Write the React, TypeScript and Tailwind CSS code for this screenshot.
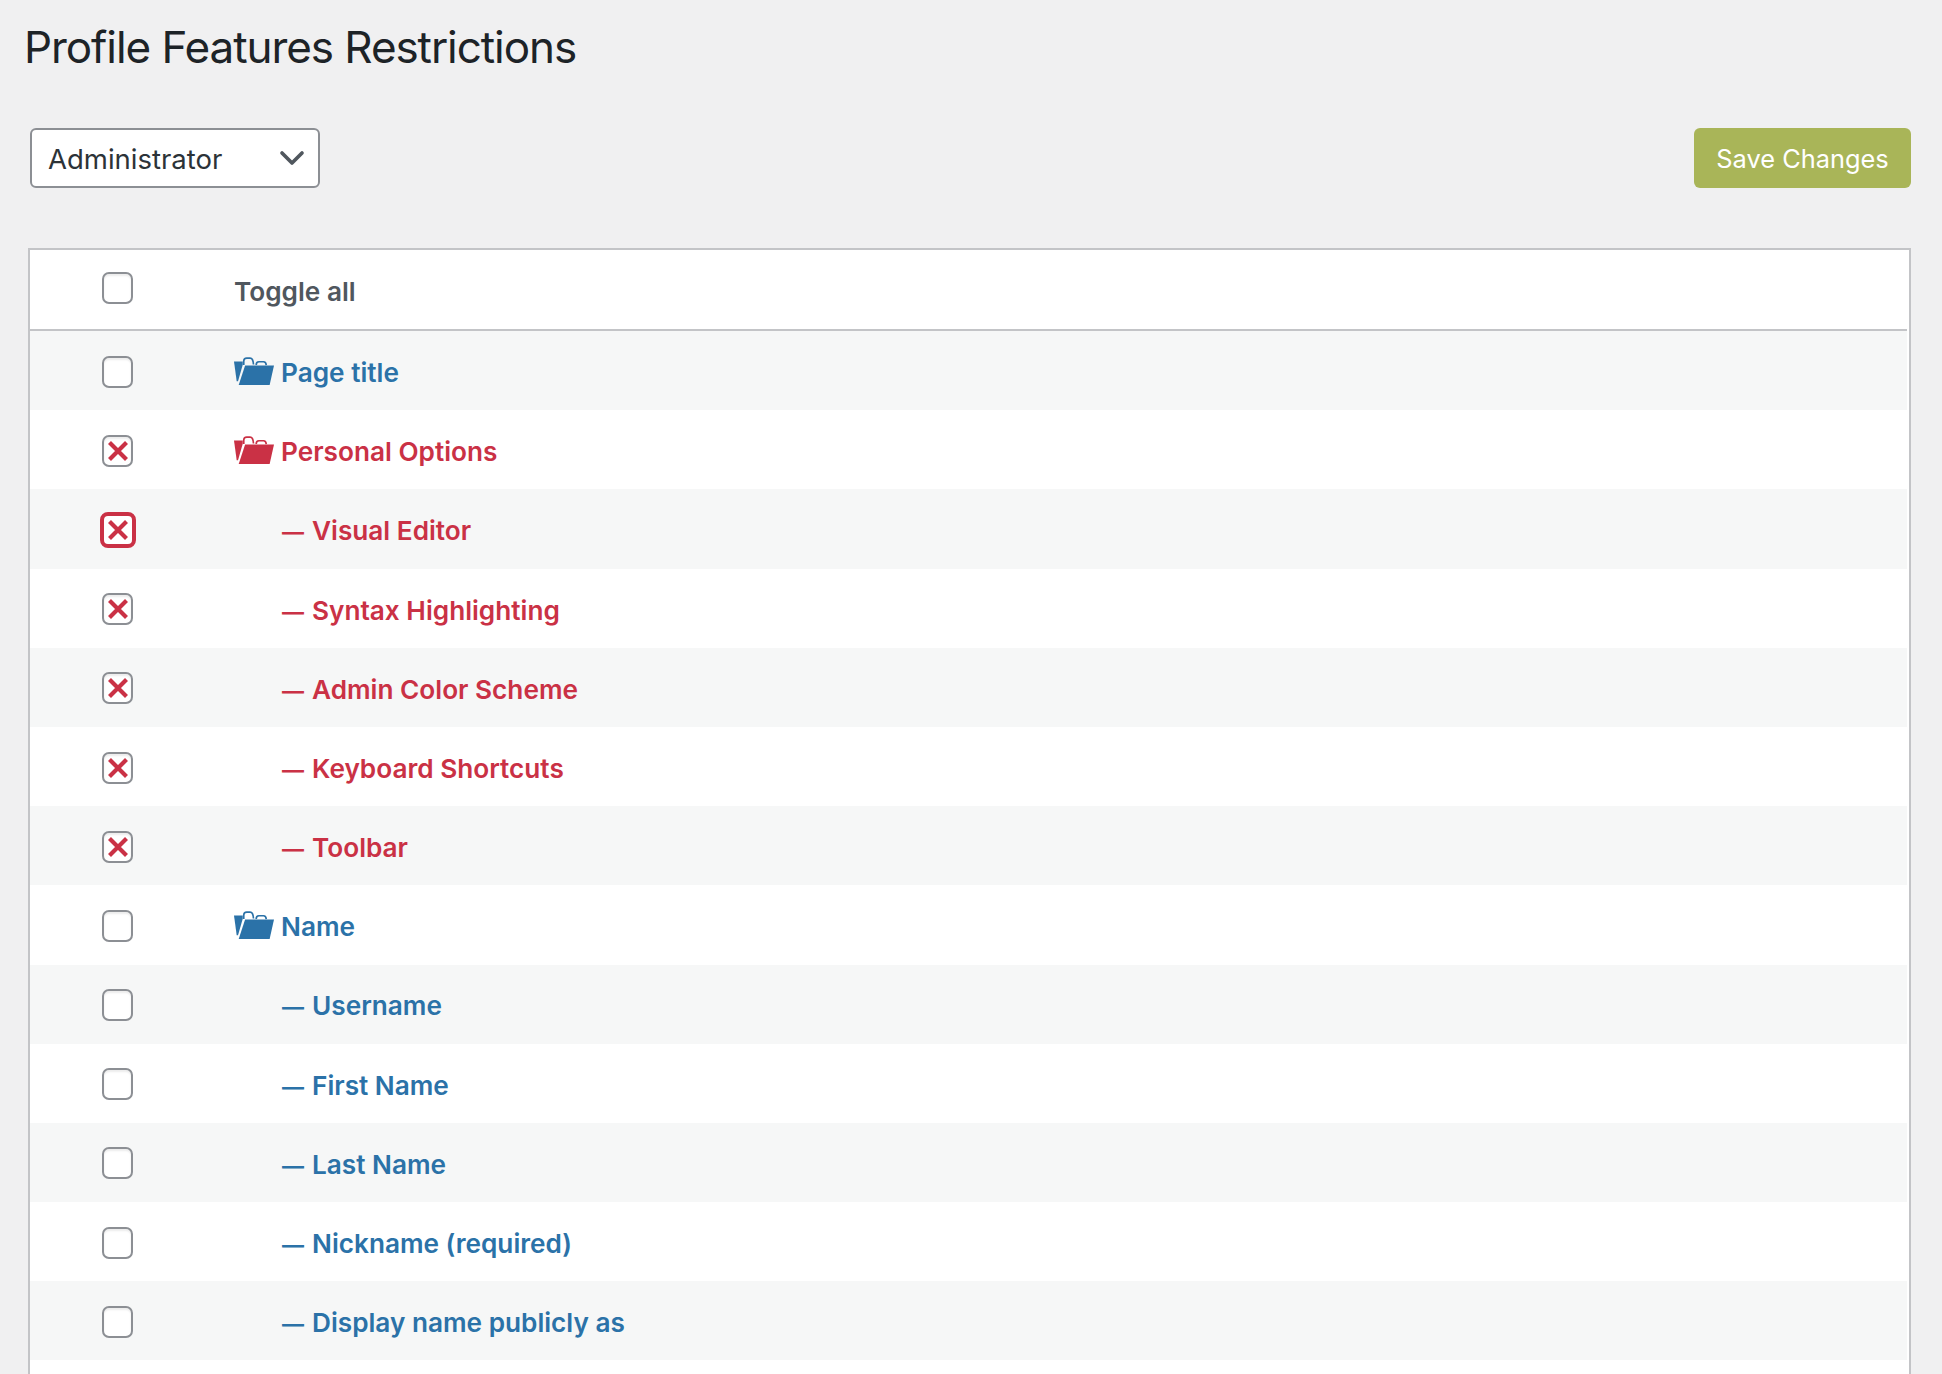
import { ChevronDown } from 'lucide-react';

type Row = { label: string; child?: boolean; off?: boolean; focus?: boolean };

const rows: Row[] = [
  { label: 'Page title' },
  { label: 'Personal Options', off: true },
  { label: 'Visual Editor', child: true, off: true, focus: true },
  { label: 'Syntax Highlighting', child: true, off: true },
  { label: 'Admin Color Scheme', child: true, off: true },
  { label: 'Keyboard Shortcuts', child: true, off: true },
  { label: 'Toolbar', child: true, off: true },
  { label: 'Name' },
  { label: 'Username', child: true },
  { label: 'First Name', child: true },
  { label: 'Last Name', child: true },
  { label: 'Nickname (required)', child: true },
  { label: 'Display name publicly as', child: true },
];

function FolderIcon() {
  return (
    <svg viewBox="0 0 119 83" className="w-10 h-7 shrink-0 fill-current stroke-current" strokeWidth="0">
      <path d="M0 13H26V23L12 72H8z" />
      <path d="M33 25H119L106 83H14z" />
      <path d="M29 24V12Q29 3 38 3H48Q57 3 58 22M66 24Q66 14 74 14H88Q95 14 96 24" fill="none" strokeWidth="5" />
    </svg>
  );
}

function Checkbox({ off, focus }: { off?: boolean; focus?: boolean }) {
  return (
    <span
      className={
        focus
          ? 'flex items-center justify-center w-9 h-9 rounded-[8px] border-4 border-[#ca3145] bg-white'
          : 'flex items-center justify-center w-[31px] h-8 rounded-[7px] border-2 border-[#8c8f94] bg-white shadow-[inset_0_2px_2px_rgba(0,0,0,0.08)]'
      }
    >
      {off && (
        <svg viewBox="0 0 20 20" className="w-5 h-5 shrink-0 stroke-[#ca3145]" strokeWidth="4.200" fill="none">
          <path d="M1.500 1.500 18.500 18.500M18.500 1.500 1.500 18.500" />
        </svg>
      )}
    </span>
  );
}

export default function App() {
  return (
    <div className="h-[1374px] overflow-hidden bg-[#f0f0f1] font-['Inter',sans-serif] pl-[28px] pr-[31px]">
      <h1 className="-ml-[4px] pt-[21px] text-[44px] leading-[52px] font-normal tracking-[-1.07px] text-[#1d2327]">
        Profile Features Restrictions
      </h1>

      <div className="mt-[55px] ml-[2px] flex items-center justify-between">
        <div className="flex items-center justify-between w-[290px] h-[60px] pl-[16px] pr-[6px] rounded-[6px] border-2 border-[#8c8f94] bg-white text-[27.500px] text-[#2c3338]">
          <span className="pt-[3px]">Administrator</span>
          <ChevronDown className="w-10 h-10 text-[#50575e]" strokeWidth={2.200} />
        </div>
        <button className="w-[217px] h-[60px] pt-[2px] rounded-[6px] bg-[#a9b558] text-[25.400px] text-white">
          Save Changes
        </button>
      </div>

      <div className="mt-[60px] border-2 border-[#c3c4c7] bg-white pr-[2px]">
        <div className="flex items-center h-[81px] border-b-2 border-[#c3c4c7] text-[26.200px] font-semibold text-[#50575e]">
          <div className="w-[175px] flex justify-center pb-[4px]">
            <Checkbox />
          </div>
          <span className="ml-[29px] pt-[4px]">Toggle all</span>
        </div>
        {rows.map((row, i) => {
          const color = row.off ? 'text-[#ca3145]' : 'text-[#2b72a8]';
          return (
            <div key={row.label} className={`flex items-center h-[79.2px] ${i % 2 === 0 ? 'bg-[#f6f7f7]' : 'bg-white'}`}>
              <div className="w-[175px] flex justify-center pt-[2px]">
                <Checkbox off={row.off} focus={row.focus} />
              </div>
              <div className={`flex items-center ml-[29px] text-[26.200px] font-semibold ${color}`}>
                {row.child ? (
                  <span className="pl-[48px] pt-[4px]">
                    <span className="text-[22px] font-bold">—</span>
                    <span className="ml-[8px]">{row.label}</span>
                  </span>
                ) : (
                  <>
                    <FolderIcon />
                    <span className="ml-[7px] pt-[4px]">{row.label}</span>
                  </>
                )}
              </div>
            </div>
          );
        })}
        <div className="h-[40px]" />
      </div>
    </div>
  );
}
